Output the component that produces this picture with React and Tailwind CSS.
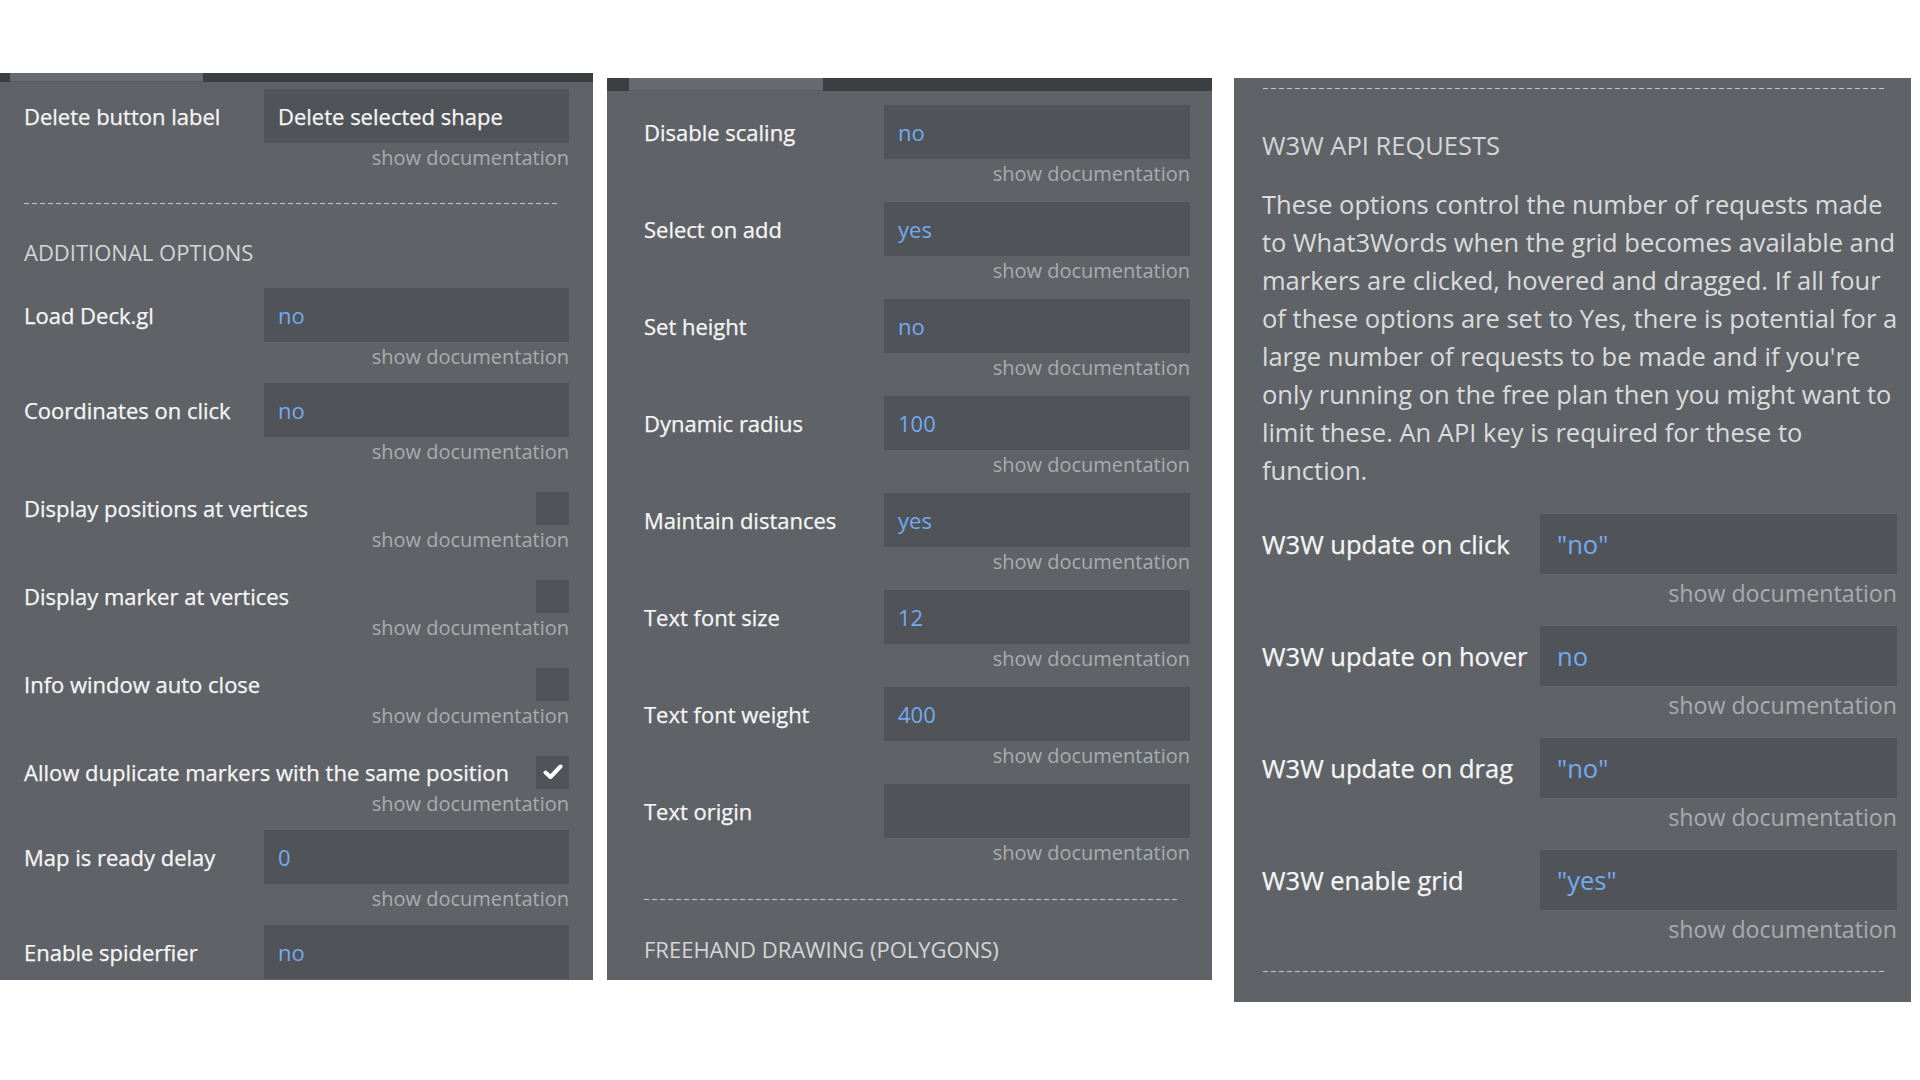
import React from 'react'

const dash = 'h-px bg-[repeating-linear-gradient(90deg,#c4c6c8_0_5px,transparent_5px_8px)]'

function TopBar({ lead, tab, height }) {
  return (
    <div className={`flex shrink-0 ${height}`}>
      <div className={`${lead} bg-[#3c3f42]`} />
      <div className={`${tab} bg-[#676b6f] border-b border-[#5a5e62]`} />
      <div className="flex-1 bg-[#3c3f42]" />
    </div>
  )
}

function Doc() {
  return (
    <div className="h-[30px] leading-[30px] text-right text-[20px] text-[#a9acaf]">show documentation</div>
  )
}

function Field({ label, value, plain, gap = 'mb-[11px]' }) {
  return (
    <div className={gap}>
      <div className="flex items-center h-[54px]">
        <div className="w-[240px] shrink-0 text-[22px] text-[#f6f6f6] [-webkit-text-stroke:0.25px_#f6f6f6]">{label}</div>
        <div
          className={`flex-1 h-full bg-[#505458] flex items-center pl-[14px] text-[22px] ${
            plain ? 'text-[#f6f6f6] [-webkit-text-stroke:0.25px_#f6f6f6]' : 'text-[#74aaf0]'
          }`}
        >
          {value}
        </div>
      </div>
      <Doc />
    </div>
  )
}

function CheckField({ label, checked }) {
  return (
    <div className="pt-[13px] mb-[11px]">
      <div className="flex items-center justify-between h-[34px]">
        <div className="text-[22px] text-[#f6f6f6] [-webkit-text-stroke:0.25px_#f6f6f6] whitespace-nowrap">{label}</div>
        <div className="w-[33px] h-[33px] bg-[#505458] flex items-center justify-center">
          {checked && (
            <svg width="20" height="16" viewBox="0 0 20 16" fill="none">
              <path d="M2.5 8.5 L7.5 13 L17.5 2.5" stroke="#ffffff" strokeWidth="4" strokeLinecap="round" strokeLinejoin="round" />
            </svg>
          )}
        </div>
      </div>
      <Doc />
    </div>
  )
}

function BigField({ label, value }) {
  return (
    <div className="mb-[13px]">
      <div className="flex items-center h-[60px]">
        <div className="w-[278px] shrink-0 text-[25.5px] text-[#f6f6f6] [-webkit-text-stroke:0.25px_#f6f6f6] whitespace-nowrap">{label}</div>
        <div className="flex-1 h-full bg-[#505458] flex items-center pl-[17px] text-[25.5px] text-[#74aaf0]">
          {value}
        </div>
      </div>
      <div className="h-[39px] leading-[39px] text-right text-[23.2px] text-[#a9acaf]">show documentation</div>
    </div>
  )
}

const para = [
  'These options control the number of requests made',
  'to What3Words when the grid becomes available and',
  'markers are clicked, hovered and dragged. If all four',
  'of these options are set to Yes, there is potential for a',
  "large number of requests to be made and if you're",
  'only running on the free plan then you might want to',
  'limit these. An API key is required for these to',
  'function.',
]

export default function App() {
  return (
    <div className="w-[1920px] h-[1080px] bg-white flex items-start font-['Open_Sans',sans-serif] overflow-hidden">
      {/* left panel */}
      <div className="w-[593px] h-[907px] mt-[73px] bg-[#5f6367] overflow-hidden flex flex-col">
        <TopBar lead="w-[10px]" tab="w-[193px]" height="h-[9px]" />
        <div className="px-[24px] pt-[7px]">
          <Field label="Delete button label" value="Delete selected shape" plain gap="mb-0" />
          <div className={`${dash} mt-[30px] mr-[9px]`} />
          <div className="mt-[33px] mb-[21px] h-[30px] leading-[30px] text-[22px] text-[#d3d5d7]">ADDITIONAL OPTIONS</div>
          <Field label="Load Deck.gl" value="no" />
          <Field label="Coordinates on click" value="no" />
          <CheckField label="Display positions at vertices" />
          <CheckField label="Display marker at vertices" />
          <CheckField label="Info window auto close" />
          <CheckField label="Allow duplicate markers with the same position" checked />
          <Field label="Map is ready delay" value="0" />
          <Field label="Enable spiderfier" value="no" />
        </div>
      </div>

      {/* middle panel */}
      <div className="w-[605px] h-[902px] mt-[78px] ml-[14px] bg-[#5f6367] overflow-hidden flex flex-col">
        <TopBar lead="w-[22px]" tab="w-[194px]" height="h-[13px]" />
        <div className="pl-[37px] pr-[22px] pt-[14px]">
          <Field label="Disable scaling" value="no" gap="mb-[13px]" />
          <Field label="Select on add" value="yes" gap="mb-[13px]" />
          <Field label="Set height" value="no" gap="mb-[13px]" />
          <Field label="Dynamic radius" value="100" gap="mb-[13px]" />
          <Field label="Maintain distances" value="yes" gap="mb-[13px]" />
          <Field label="Text font size" value="12" gap="mb-[13px]" />
          <Field label="Text font weight" value="400" gap="mb-[13px]" />
          <Field label="Text origin" value="" gap="mb-0" />
          <div className={`${dash} mt-[31px] mr-[10px]`} />
          <div className="mt-[34px] h-[30px] leading-[30px] text-[22px] text-[#d3d5d7]">FREEHAND DRAWING (POLYGONS)</div>
        </div>
      </div>

      {/* right panel */}
      <div className="w-[677px] h-[924px] mt-[78px] ml-[22px] bg-[#5f6367] overflow-hidden">
        <div className="pl-[28px] pr-[14px] pt-[10px]">
          <div className={`${dash} ml-[1px] mr-[10px]`} />
          <div className="mt-[39px] h-[35px] leading-[35px] text-[25.5px] text-[#d3d5d7]">W3W API REQUESTS</div>
          <div className="mt-[22px] mb-[25px] text-[25.5px] leading-[38px] text-[#dadbdc]">
            {para.map((line) => (
              <div key={line} className="whitespace-nowrap">{line}</div>
            ))}
          </div>
          <BigField label="W3W update on click" value={'"no"'} />
          <BigField label="W3W update on hover" value="no" />
          <BigField label="W3W update on drag" value={'"no"'} />
          <BigField label="W3W enable grid" value={'"yes"'} />
          <div className={`${dash} mt-[22px] ml-[1px] mr-[10px]`} />
        </div>
      </div>
    </div>
  )
}
